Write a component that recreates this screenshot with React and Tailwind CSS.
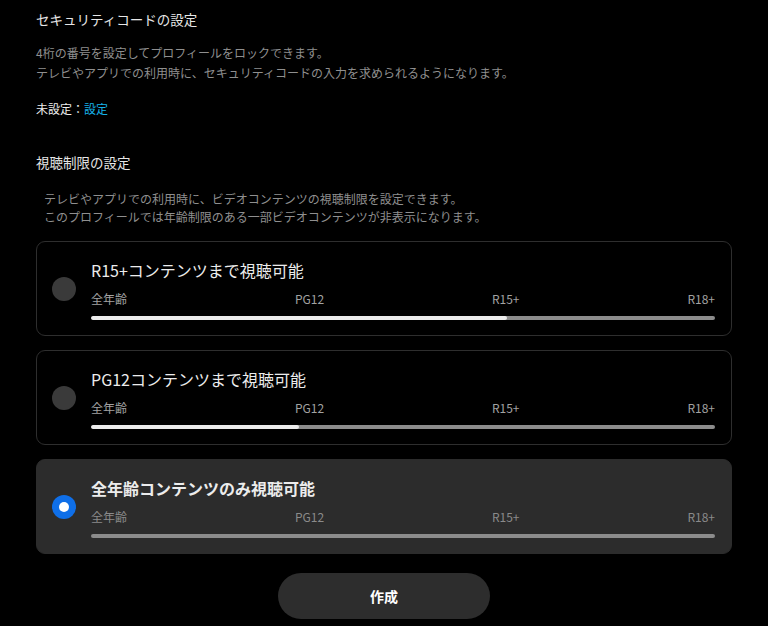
import React from "react";

const FONT = { fontFamily: '"Noto Sans CJK JP", "Noto Sans", sans-serif' };

const options = [
  { title: "R15+コンテンツまで視聴可能", fill: 66.667, selected: false },
  { title: "PG12コンテンツまで視聴可能", fill: 33.333, selected: false },
  { title: "全年齢コンテンツのみ視聴可能", fill: 0, selected: true },
];

function Card({ title, fill, selected }) {
  return (
    <div
      className={
        "flex h-[95px] items-center rounded-[9px] pl-[15px] pr-[16px] " +
        (selected ? "bg-[#2c2c2c] border border-[#2c2c2c]" : "border border-[#2e2e2e] bg-black")
      }
    >
      {selected ? (
        <div className="flex h-[24px] w-[24px] shrink-0 items-center justify-center rounded-full bg-[#0f6fe8]">
          <div className="h-[10px] w-[10px] rounded-full bg-white" />
        </div>
      ) : (
        <div className="h-[24px] w-[24px] shrink-0 rounded-full bg-[#3a3a3a]" />
      )}
      <div className="ml-[15px] flex flex-1 flex-col">
        <div
          className={
            "text-[16px] leading-[24px] text-[#ececec] " + (selected ? "font-bold" : "font-normal")
          }
        >
          {title}
        </div>
        <div
          className={
            "mt-[9px] flex justify-between text-[12px] leading-[16px] " +
            (selected ? "text-[#8a8a8a]" : "text-[#a2a2a2]")
          }
        >
          <span>全年齢</span>
          <span>PG12</span>
          <span>R15+</span>
          <span>R18+</span>
        </div>
        <div className="mt-[9px] h-[4px] w-full overflow-hidden rounded-full bg-[#8c8c8c]">
          <div className="h-full rounded-full bg-[#ececec]" style={{ width: `${fill}%` }} />
        </div>
      </div>
    </div>
  );
}

export default function App() {
  return (
    <div className="min-h-[626px] w-full bg-black px-[36px] pt-[9px] pb-[7px]" style={FONT}>
      <div className="text-[13.5px] leading-[20px] text-[#e6e6e6]">セキュリティコードの設定</div>
      <div className="mt-[14px] text-[12px] leading-[20px] text-[#8f8f8f]">
        <div>4桁の番号を設定してプロフィールをロックできます。</div>
        <div>テレビやアプリでの利用時に、セキュリティコードの入力を求められるようになります。</div>
      </div>
      <div className="mt-[17px] text-[12px] leading-[18px] text-[#eeeeee]">
        未設定：<span className="text-[#16b2ea]">設定</span>
      </div>
      <div className="mt-[34px] text-[13.5px] leading-[20px] text-[#e6e6e6]">視聴制限の設定</div>
      <div className="mt-[18px] pl-[8px] text-[12px] leading-[18px] text-[#8f8f8f]">
        <div>テレビやアプリでの利用時に、ビデオコンテンツの視聴制限を設定できます。</div>
        <div>このプロフィールでは年齢制限のある一部ビデオコンテンツが非表示になります。</div>
      </div>
      <div className="mt-[15px] flex flex-col gap-[14px]">
        {options.map((o) => (
          <Card key={o.title} {...o} />
        ))}
      </div>
      <div className="mt-[19px] flex justify-center">
        <button className="h-[46px] w-[212px] rounded-full bg-[#2d2d2d] text-[14px] font-bold text-white">
          作成
        </button>
      </div>
    </div>
  );
}
